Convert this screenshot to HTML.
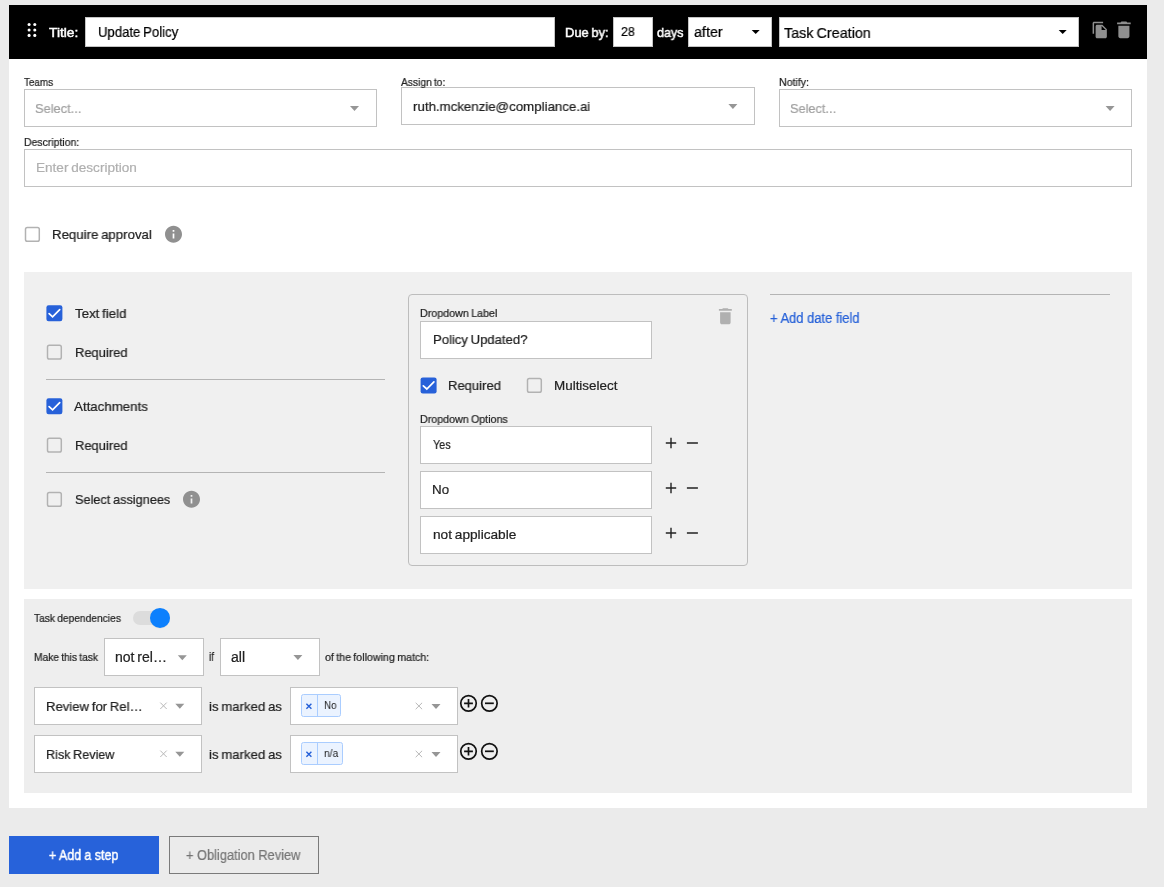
<!DOCTYPE html>
<html><head><meta charset="utf-8"><title>Task</title>
<style>
*{box-sizing:border-box;margin:0;padding:0}
html,body{width:1164px;height:887px;overflow:hidden}
body{background:#ebebeb;font-family:"Liberation Sans",sans-serif;position:relative}
.a{position:absolute}
.t{position:absolute;white-space:nowrap;transform-origin:0 50%;will-change:transform}
.w{position:absolute;background:#fff}
.b{position:absolute;background:#fff;border:1px solid #c2c2c2}
.hr{position:absolute;height:1px;background:#b4b4b4}
svg{position:absolute;overflow:visible}
</style></head><body>
<div class="w" style="left:9px;top:5px;width:1138px;height:803px"></div>
<div class="a" style="left:9px;top:5px;width:1138px;height:54px;background:#000"></div>
<svg style="left:0;top:0" width="1" height="1" fill="#fff"><circle cx="29.1" cy="24.5" r="1.55"/><circle cx="29.1" cy="30" r="1.55"/><circle cx="29.1" cy="35.4" r="1.55"/><circle cx="34.8" cy="24.5" r="1.55"/><circle cx="34.8" cy="30" r="1.55"/><circle cx="34.8" cy="35.4" r="1.55"/></svg>
<div class="w" style="left:85px;top:17px;width:470px;height:30px;border:1px solid #c4c4c4"></div>
<div class="w" style="left:613px;top:17px;width:40px;height:30px;border:1px solid #c4c4c4"></div>
<div class="w" style="left:688px;top:17px;width:84px;height:30px;border:1px solid #c4c4c4"></div>
<div class="w" style="left:779px;top:17px;width:300px;height:30px;border:1px solid #c4c4c4"></div>
<svg style="left:0;top:0" width="1" height="1"><path d="M751.70 29.90h8l-4.0 4.2z" fill="#000"/></svg>
<svg style="left:0;top:0" width="1" height="1"><path d="M1058.70 29.90h8l-4.0 4.2z" fill="#000"/></svg>
<svg style="left:0;top:0" width="1" height="1"><g transform="translate(1091.1,21) scale(.75)"><path fill="#8f8f8f" d="M16 1H4c-1.100 0-2 .9-2 2v14h2V3h12V1zm-1 4l6 6v10c0 1.100-.9 2-2 2H7.990C6.890 23 6 22.100 6 21l.010-14c0-1.100.890-2 1.990-2h7zm-1 7h5.500L14 6.500V12z"/></g></svg>
<svg style="left:0;top:0" width="1" height="1"><g transform="translate(1117.1,21.6) scale(0.9714,0.9222) translate(-5,-3)"><path fill="#8f8f8f" d="M6.300 7.600h11.400V19c0 1.100-.9 2-2 2H8.300c-1.100 0-2-.9-2-2zM19 4h-3.500l-1-1h-5l-1 1H5v1.900h14V4z"/></g></svg>
<div class="b" style="left:24px;top:89px;width:353px;height:38px"></div>
<div class="b" style="left:401px;top:87px;width:354px;height:38px"></div>
<div class="b" style="left:779px;top:89px;width:353px;height:38px"></div>
<svg style="left:0;top:0" width="1" height="1"><path d="M350.00 105.90h9l-4.5 5z" fill="#969696"/></svg>
<svg style="left:0;top:0" width="1" height="1"><path d="M728.40 104.00h9l-4.5 5z" fill="#969696"/></svg>
<svg style="left:0;top:0" width="1" height="1"><path d="M1105.60 105.90h9l-4.5 5z" fill="#969696"/></svg>
<div class="b" style="left:24px;top:149px;width:1108px;height:38px"></div>
<svg style="left:0;top:0" width="1" height="1"><rect x="25.50" y="227.50" width="13.8" height="13.8" rx="1.8" fill="none" stroke="#b2b2b2" stroke-width="1.5"/></svg>
<svg style="left:0;top:0" width="1" height="1"><g transform="translate(163.30,224.10) scale(0.8500)"><path fill="#909090" d="M12 2C6.480 2 2 6.480 2 12s4.480 10 10 10 10-4.480 10-10S17.520 2 12 2zm1 15h-2v-6h2v6zm0-8h-2V7h2v2z"/></g></svg>
<div class="a" style="left:24px;top:272px;width:1108px;height:317px;background:#f0f0f0"></div>
<svg style="left:0;top:0" width="1" height="1"><rect x="46.4" y="305.2" width="16" height="16" rx="2.2" fill="#2761d9"/><path d="M49.10 313.60L52.60 316.80L59.70 309.70" stroke="#fff" stroke-width="1.7" fill="none" stroke-linecap="round" stroke-linejoin="miter"/></svg>
<svg style="left:0;top:0" width="1" height="1"><rect x="47.50" y="345.30" width="13.8" height="13.8" rx="1.8" fill="none" stroke="#b2b2b2" stroke-width="1.5"/></svg>
<div class="hr" style="left:46px;top:379px;width:339px"></div>
<svg style="left:0;top:0" width="1" height="1"><rect x="46.4" y="398.2" width="16" height="16" rx="2.2" fill="#2761d9"/><path d="M49.10 406.60L52.60 409.80L59.70 402.70" stroke="#fff" stroke-width="1.7" fill="none" stroke-linecap="round" stroke-linejoin="miter"/></svg>
<svg style="left:0;top:0" width="1" height="1"><rect x="47.50" y="438.30" width="13.8" height="13.8" rx="1.8" fill="none" stroke="#b2b2b2" stroke-width="1.5"/></svg>
<div class="hr" style="left:46px;top:472px;width:339px"></div>
<svg style="left:0;top:0" width="1" height="1"><rect x="47.50" y="492.40" width="13.8" height="13.8" rx="1.8" fill="none" stroke="#b2b2b2" stroke-width="1.5"/></svg>
<svg style="left:0;top:0" width="1" height="1"><g transform="translate(181.30,489.10) scale(0.8500)"><path fill="#909090" d="M12 2C6.480 2 2 6.480 2 12s4.480 10 10 10 10-4.480 10-10S17.520 2 12 2zm1 15h-2v-6h2v6zm0-8h-2V7h2v2z"/></g></svg>
<div class="a" style="left:408px;top:294px;width:340px;height:272px;border:1px solid #bdbdbd;border-radius:4px"></div>
<div class="b" style="left:420px;top:321px;width:232px;height:38px"></div>
<svg style="left:0;top:0" width="1" height="1"><g transform="translate(718.9,308.2) scale(0.9214,0.8889) translate(-5,-3)"><path fill="#b0b0b0" d="M6.300 7.600h11.400V19c0 1.100-.9 2-2 2H8.300c-1.100 0-2-.9-2-2zM19 4h-3.500l-1-1h-5l-1 1H5v1.900h14V4z"/></g></svg>
<svg style="left:0;top:0" width="1" height="1"><rect x="420.6" y="377.4" width="16" height="16" rx="2.2" fill="#2761d9"/><path d="M423.30 385.80L426.80 389.00L433.90 381.90" stroke="#fff" stroke-width="1.7" fill="none" stroke-linecap="round" stroke-linejoin="miter"/></svg>
<svg style="left:0;top:0" width="1" height="1"><rect x="527.50" y="378.50" width="13.8" height="13.8" rx="1.8" fill="none" stroke="#b2b2b2" stroke-width="1.5"/></svg>
<div class="b" style="left:420px;top:426px;width:232px;height:38px"></div>
<svg style="left:0;top:0" width="1" height="1"><path d="M665.8 443h10.4M671 437.8v10.4M686.9 443h11" stroke="#222" stroke-width="1.4" fill="none"/></svg>
<div class="b" style="left:420px;top:471px;width:232px;height:38px"></div>
<svg style="left:0;top:0" width="1" height="1"><path d="M665.8 488h10.4M671 482.8v10.4M686.9 488h11" stroke="#222" stroke-width="1.4" fill="none"/></svg>
<div class="b" style="left:420px;top:516px;width:232px;height:38px"></div>
<svg style="left:0;top:0" width="1" height="1"><path d="M665.8 533h10.4M671 527.8v10.4M686.9 533h11" stroke="#222" stroke-width="1.4" fill="none"/></svg>
<div class="hr" style="left:770px;top:294px;width:340px"></div>
<div class="a" style="left:24px;top:599px;width:1108px;height:194px;background:#eee"></div>
<div class="a" style="left:133px;top:611px;width:37px;height:14px;border-radius:7px;background:#dcdcdc"></div>
<svg style="left:0;top:0" width="1" height="1"><circle cx="160" cy="618.6" r="10" fill="#000" opacity=".06"/><circle cx="160" cy="617.9" r="10" fill="#0d80fd"/></svg>
<div class="b" style="left:104px;top:638px;width:100px;height:38px"></div>
<div class="b" style="left:220px;top:638px;width:100px;height:38px"></div>
<svg style="left:0;top:0" width="1" height="1"><path d="M177.80 655.20h9l-4.5 5z" fill="#969696"/></svg>
<svg style="left:0;top:0" width="1" height="1"><path d="M293.40 654.90h9l-4.5 5z" fill="#969696"/></svg>
<div class="b" style="left:34px;top:687px;width:168px;height:38px"></div>
<div class="b" style="left:290px;top:687px;width:168px;height:38px"></div>
<svg style="left:0;top:0" width="1" height="1"><path d="M160.30 702.60l6.4 6.4M166.70 702.60l-6.4 6.4" stroke="#b8b8b8" stroke-width="1" fill="none"/></svg>
<svg style="left:0;top:0" width="1" height="1"><path d="M175.30 703.70h9l-4.5 5z" fill="#969696"/></svg>
<svg style="left:0;top:0" width="1" height="1"><path d="M415.70 702.80l6.4 6.4M422.10 702.80l-6.4 6.4" stroke="#b8b8b8" stroke-width="1" fill="none"/></svg>
<svg style="left:0;top:0" width="1" height="1"><path d="M431.50 703.90h9l-4.5 5z" fill="#969696"/></svg>
<svg style="left:0;top:0" width="1" height="1"><rect x="301.5" y="694.5" width="39" height="22" rx="2" fill="#ebf3ff" stroke="#aacdff"/><path d="M317.5 694.5v22" stroke="#aacdff"/></svg>
<svg style="left:0;top:0" width="1" height="1"><path d="M306.40 703.70l5.0 5.0M311.40 703.70l-5.0 5.0" stroke="#2560d8" stroke-width="1.4" fill="none"/></svg>
<svg style="left:0;top:0" width="1" height="1" fill="none" stroke="#111" stroke-width="1.7"><circle cx="468.5" cy="703.3" r="7.75"/><path d="M464.1 703.3h8.8M468.5 699.0v8.6"/><circle cx="489.4" cy="703.3" r="7.75"/><path d="M485 703.3h8.8"/></svg>
<div class="b" style="left:34px;top:735px;width:168px;height:38px"></div>
<div class="b" style="left:290px;top:735px;width:168px;height:38px"></div>
<svg style="left:0;top:0" width="1" height="1"><path d="M160.30 750.60l6.4 6.4M166.70 750.60l-6.4 6.4" stroke="#b8b8b8" stroke-width="1" fill="none"/></svg>
<svg style="left:0;top:0" width="1" height="1"><path d="M175.30 751.70h9l-4.5 5z" fill="#969696"/></svg>
<svg style="left:0;top:0" width="1" height="1"><path d="M415.70 750.80l6.4 6.4M422.10 750.80l-6.4 6.4" stroke="#b8b8b8" stroke-width="1" fill="none"/></svg>
<svg style="left:0;top:0" width="1" height="1"><path d="M431.50 751.90h9l-4.5 5z" fill="#969696"/></svg>
<svg style="left:0;top:0" width="1" height="1"><rect x="301.5" y="742.5" width="41" height="22" rx="2" fill="#ebf3ff" stroke="#aacdff"/><path d="M317.5 742.5v22" stroke="#aacdff"/></svg>
<svg style="left:0;top:0" width="1" height="1"><path d="M306.40 751.70l5.0 5.0M311.40 751.70l-5.0 5.0" stroke="#2560d8" stroke-width="1.4" fill="none"/></svg>
<svg style="left:0;top:0" width="1" height="1" fill="none" stroke="#111" stroke-width="1.7"><circle cx="468.5" cy="751.3" r="7.75"/><path d="M464.1 751.3h8.8M468.5 747.0v8.6"/><circle cx="489.4" cy="751.3" r="7.75"/><path d="M485 751.3h8.8"/></svg>
<div class="a" style="left:9px;top:836px;width:150px;height:38px;background:#2762da"></div>
<div class="a" style="left:169px;top:836px;width:150px;height:38px;border:1px solid #7a7a7a"></div>
<div class="t" style="left:49.44px;top:26.25px;font-size:13px;line-height:13px;color:#fff;transform:scaleX(1.0570);word-spacing:-0.91px;-webkit-text-stroke:0.48px #fff">Title:</div>
<div class="t" style="left:98.07px;top:25.40px;font-size:14px;line-height:14px;color:#000;transform:scaleX(0.9382);word-spacing:-0.98px;-webkit-text-stroke:0.22px #000">Update Policy</div>
<div class="t" style="left:565.05px;top:26.25px;font-size:13px;line-height:13px;color:#fff;transform:scaleX(0.9939);word-spacing:-0.91px;-webkit-text-stroke:0.48px #fff">Due by:</div>
<div class="t" style="left:621.11px;top:25.25px;font-size:13px;line-height:13px;color:#000;transform:scaleX(0.9543);word-spacing:-0.91px;-webkit-text-stroke:0.22px #000">28</div>
<div class="t" style="left:657.44px;top:26.25px;font-size:13px;line-height:13px;color:#fff;transform:scaleX(0.9628);word-spacing:-0.91px;-webkit-text-stroke:0.48px #fff">days</div>
<div class="t" style="left:694.11px;top:24.12px;font-size:15.5px;line-height:15.5px;color:#000;transform:scaleX(0.9263);word-spacing:-1.09px;-webkit-text-stroke:0.22px #000">after</div>
<div class="t" style="left:784.31px;top:24.55px;font-size:15px;line-height:15px;color:#000;transform:scaleX(0.9575);word-spacing:-1.05px;-webkit-text-stroke:0.22px #000">Task Creation</div>
<div class="t" style="left:24.21px;top:76.95px;font-size:11px;line-height:11px;color:#222;transform:scaleX(0.8961);word-spacing:-0.77px;-webkit-text-stroke:0.22px #222">Teams</div>
<div class="t" style="left:35.41px;top:101.91px;font-size:13.4px;line-height:13.4px;color:#a0a0a0;transform:scaleX(0.9585);word-spacing:-0.94px;-webkit-text-stroke:0.22px #a0a0a0">Select...</div>
<div class="t" style="left:400.91px;top:76.95px;font-size:11px;line-height:11px;color:#222;transform:scaleX(0.9327);word-spacing:-0.77px;-webkit-text-stroke:0.22px #222">Assign to:</div>
<div class="t" style="left:412.81px;top:99.91px;font-size:13.4px;line-height:13.4px;color:#222;transform:scaleX(0.9913);word-spacing:-0.94px;-webkit-text-stroke:0.22px #222">ruth.mckenzie@compliance.ai</div>
<div class="t" style="left:778.51px;top:76.95px;font-size:11px;line-height:11px;color:#222;transform:scaleX(0.9667);word-spacing:-0.77px;-webkit-text-stroke:0.22px #222">Notify:</div>
<div class="t" style="left:790.31px;top:101.91px;font-size:13.4px;line-height:13.4px;color:#a0a0a0;transform:scaleX(0.9522);word-spacing:-0.94px;-webkit-text-stroke:0.22px #a0a0a0">Select...</div>
<div class="t" style="left:23.81px;top:136.95px;font-size:11px;line-height:11px;color:#222;transform:scaleX(0.9510);word-spacing:-0.77px;-webkit-text-stroke:0.22px #222">Description:</div>
<div class="t" style="left:35.60px;top:160.91px;font-size:13.4px;line-height:13.4px;color:#b0b0b0;transform:scaleX(1.0131);word-spacing:-0.94px;-webkit-text-stroke:0.22px #b0b0b0">Enter description</div>
<div class="t" style="left:51.62px;top:227.91px;font-size:13.4px;line-height:13.4px;color:#222;transform:scaleX(0.9881);word-spacing:-0.94px;-webkit-text-stroke:0.22px #222">Require approval</div>
<div class="t" style="left:75.21px;top:306.91px;font-size:13.4px;line-height:13.4px;color:#222;transform:scaleX(0.9907);word-spacing:-0.94px;-webkit-text-stroke:0.22px #222">Text field</div>
<div class="t" style="left:74.84px;top:345.91px;font-size:13.4px;line-height:13.4px;color:#222;transform:scaleX(0.9657);word-spacing:-0.94px;-webkit-text-stroke:0.22px #222">Required</div>
<div class="t" style="left:74.01px;top:399.91px;font-size:13.4px;line-height:13.4px;color:#222;transform:scaleX(0.9926);word-spacing:-0.94px;-webkit-text-stroke:0.22px #222">Attachments</div>
<div class="t" style="left:74.84px;top:438.91px;font-size:13.4px;line-height:13.4px;color:#222;transform:scaleX(0.9657);word-spacing:-0.94px;-webkit-text-stroke:0.22px #222">Required</div>
<div class="t" style="left:74.51px;top:492.91px;font-size:13.4px;line-height:13.4px;color:#222;transform:scaleX(0.9501);word-spacing:-0.94px;-webkit-text-stroke:0.22px #222">Select assignees</div>
<div class="t" style="left:420.41px;top:307.95px;font-size:11px;line-height:11px;color:#222;transform:scaleX(0.9744);word-spacing:-0.77px;-webkit-text-stroke:0.22px #222">Dropdown Label</div>
<div class="t" style="left:432.73px;top:332.91px;font-size:13.4px;line-height:13.4px;color:#222;transform:scaleX(0.9774);word-spacing:-0.94px;-webkit-text-stroke:0.22px #222">Policy Updated?</div>
<div class="t" style="left:448.44px;top:378.91px;font-size:13.4px;line-height:13.4px;color:#222;transform:scaleX(0.9733);word-spacing:-0.94px;-webkit-text-stroke:0.22px #222">Required</div>
<div class="t" style="left:554.31px;top:378.91px;font-size:13.4px;line-height:13.4px;color:#222;transform:scaleX(1.0024);word-spacing:-0.94px;-webkit-text-stroke:0.22px #222">Multiselect</div>
<div class="t" style="left:420.41px;top:413.95px;font-size:11px;line-height:11px;color:#222;transform:scaleX(0.9719);word-spacing:-0.77px;-webkit-text-stroke:0.22px #222">Dropdown Options</div>
<div class="t" style="left:433.31px;top:437.91px;font-size:13.4px;line-height:13.4px;color:#222;transform:scaleX(0.8028);word-spacing:-0.94px;-webkit-text-stroke:0.22px #222">Yes</div>
<div class="t" style="left:432.32px;top:482.91px;font-size:13.4px;line-height:13.4px;color:#222;transform:scaleX(0.9942);word-spacing:-0.94px;-webkit-text-stroke:0.22px #222">No</div>
<div class="t" style="left:433.31px;top:527.91px;font-size:13.4px;line-height:13.4px;color:#222;transform:scaleX(1.0200);word-spacing:-0.94px;-webkit-text-stroke:0.22px #222">not applicable</div>
<div class="t" style="left:770.31px;top:311.57px;font-size:13.8px;line-height:13.8px;color:#2560d8;transform:scaleX(0.9381);word-spacing:0.00px;-webkit-text-stroke:0.22px #2560d8">+ Add date field</div>
<div class="t" style="left:33.91px;top:612.95px;font-size:11px;line-height:11px;color:#222;transform:scaleX(0.9305);word-spacing:-0.77px;-webkit-text-stroke:0.22px #222">Task dependencies</div>
<div class="t" style="left:33.91px;top:651.95px;font-size:11px;line-height:11px;color:#222;transform:scaleX(0.9310);word-spacing:-0.77px;-webkit-text-stroke:0.22px #222">Make this task</div>
<div class="t" style="left:114.61px;top:650.40px;font-size:14px;line-height:14px;color:#222;transform:scaleX(0.9990);word-spacing:-0.98px;-webkit-text-stroke:0.22px #222">not rel…</div>
<div class="t" style="left:209.11px;top:651.10px;font-size:12px;line-height:12px;color:#222;transform:scaleX(0.8371);word-spacing:-0.84px;-webkit-text-stroke:0.22px #222">if</div>
<div class="t" style="left:230.81px;top:650.40px;font-size:14px;line-height:14px;color:#222;transform:scaleX(1.0060);word-spacing:-0.98px;-webkit-text-stroke:0.22px #222">all</div>
<div class="t" style="left:325.11px;top:651.95px;font-size:11px;line-height:11px;color:#222;transform:scaleX(0.9729);word-spacing:-0.77px;-webkit-text-stroke:0.22px #222">of the following match:</div>
<div class="t" style="left:45.53px;top:699.91px;font-size:13.4px;line-height:13.4px;color:#222;transform:scaleX(0.9802);word-spacing:-0.94px;-webkit-text-stroke:0.22px #222">Review for Rel…</div>
<div class="t" style="left:209.01px;top:699.91px;font-size:13.4px;line-height:13.4px;color:#222;transform:scaleX(0.9845);word-spacing:-0.94px;-webkit-text-stroke:0.22px #222">is marked as</div>
<div class="t" style="left:323.70px;top:699.95px;font-size:11px;line-height:11px;color:#222;transform:scaleX(0.8893);word-spacing:-0.77px">No</div>
<div class="t" style="left:45.57px;top:747.91px;font-size:13.4px;line-height:13.4px;color:#222;transform:scaleX(0.9407);word-spacing:-0.94px;-webkit-text-stroke:0.22px #222">Risk Review</div>
<div class="t" style="left:209.01px;top:747.91px;font-size:13.4px;line-height:13.4px;color:#222;transform:scaleX(0.9845);word-spacing:-0.94px;-webkit-text-stroke:0.22px #222">is marked as</div>
<div class="t" style="left:323.70px;top:747.95px;font-size:11px;line-height:11px;color:#222;transform:scaleX(0.9336);word-spacing:-0.77px">n/a</div>
<div class="t" style="left:49.24px;top:848.40px;font-size:14px;line-height:14px;color:#fff;transform:scaleX(0.8852);word-spacing:0.00px;-webkit-text-stroke:0.48px #fff">+ Add a step</div>
<div class="t" style="left:186.31px;top:848.40px;font-size:14px;line-height:14px;color:#757575;transform:scaleX(0.9157);word-spacing:0.00px;-webkit-text-stroke:0.22px #757575">+ Obligation Review</div>
</body></html>
